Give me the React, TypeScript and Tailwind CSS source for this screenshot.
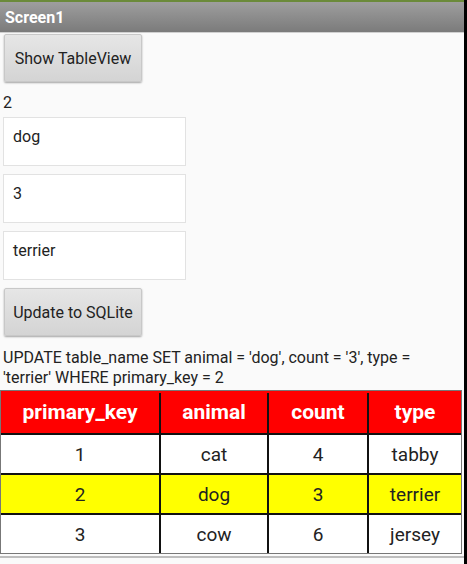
const rows = [
  { key: "1", animal: "cat", count: "4", type: "tabby", hl: false },
  { key: "2", animal: "dog", count: "3", type: "terrier", hl: true },
  { key: "3", animal: "cow", count: "6", type: "jersey", hl: false },
];

const cols = ["w-[160px]", "w-[108px]", "w-[100px]", "flex-1"];

const Btn = ({ label }: { label: string }) => (
  <button className="ml-[4px] h-[48px] w-[138px] rounded-[2px] border border-[#c8c8c8] bg-gradient-to-b from-[#e6e6e6] to-[#d4d4d4] pt-[1px] text-[16px] text-[#222] shadow-[0_1px_2px_rgba(0,0,0,0.35)]">
    {label}
  </button>
);

const Field = ({ value }: { value: string }) => (
  <div className="ml-[3px] h-[49px] w-[183px] border border-[#e2e2e2] bg-white pl-[9px] pt-[7px] text-[16px] text-[#222]">
    {value}
  </div>
);

export default function App() {
  return (
    <div className="flex h-[564px] w-[467px] font-['Roboto',sans-serif]">
      <div className="flex w-[464px] flex-col bg-[#fafafa]">
        {/* title bar */}
        <div className="h-[33px] shrink-0 border-t-2 border-b border-t-[#6b8a3a] border-b-[#d0d0d0] bg-gradient-to-b from-[#9e9e9e] to-[#7b7b7b] pl-[5px] pt-[4px] text-[16px] font-bold text-white">
          Screen1
        </div>

        <div className="mt-[1px]">
          <Btn label="Show TableView" />
        </div>
        <div className="mt-[11px] pl-[3px] text-[16px] leading-[20px] text-[#222]">2</div>
        <div className="mt-[4px] flex flex-col gap-[8px]">
          <Field value="dog" />
          <Field value="3" />
          <Field value="terrier" />
        </div>
        <div className="mt-[8px]">
          <Btn label="Update to SQLite" />
        </div>

        <p className="mt-[12px] pl-[3px] pr-[4px] text-[16px] leading-[20px] text-[#222]">
          UPDATE table_name SET animal = 'dog', count = '3', type = 'terrier' WHERE primary_key = 2
        </p>

        {/* table */}
        <div className="mt-[2px] mr-[2px] border border-[#777] text-center">
          <div className="flex h-[42px] bg-[#ff0000] pt-[2px] text-[21px] font-bold text-white">
            {["primary_key", "animal", "count", "type"].map((h, i) => (
              <div
                key={h}
                className={`${cols[i]} flex items-center justify-center ${i < 3 ? "border-r-2 border-r-[#111]" : ""}`}
              >
                {h}
              </div>
            ))}
          </div>
          {rows.map((r) => (
            <div
              key={r.key}
              className={`flex h-[40px] border-t-2 border-t-[#111] text-[19px] text-[#222] ${r.hl ? "bg-[#ffff00]" : "bg-white"}`}
            >
              {[r.key, r.animal, r.count, r.type].map((v, i) => (
                <div
                  key={i}
                  className={`${cols[i]} flex items-center justify-center pt-[2px] ${i < 3 ? "border-r-2 border-r-[#111]" : ""}`}
                >
                  {v}
                </div>
              ))}
            </div>
          ))}
        </div>
        <div className="mt-[2px] h-[2px] bg-[#bdbdbd]" />
      </div>
      <div className="w-[3px] bg-black" />
    </div>
  );
}
